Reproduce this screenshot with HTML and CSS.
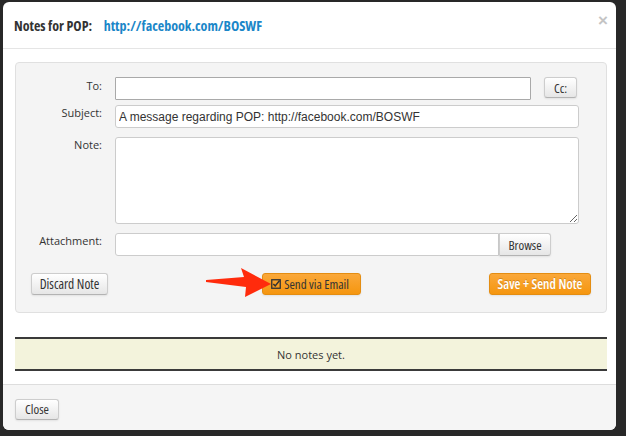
FILE: index.html
```html
<!DOCTYPE html>
<html lang="en">
<head>
  <meta charset="UTF-8">
  <title>Notes for POP</title>
  <link rel="stylesheet" href="styles.css">
</head>
<body>
  <div class="modal">
    <div class="modal-header">
      <h3>Notes for POP: <a href="#">http://facebook.com/BOSWF</a></h3>
      <span class="close">×</span>
    </div>

    <div class="modal-body">
      <div class="well">
        <div class="row row-to">
          <label>To:</label>
          <input type="text" class="input dark">
          <button class="btn cc">Cc:</button>
        </div>
        <div class="row">
          <label>Subject:</label>
          <input type="text" class="input" value="A message regarding POP: http://facebook.com/BOSWF">
        </div>
        <div class="row">
          <label>Note:</label>
          <textarea class="input note"></textarea>
        </div>
        <div class="row row-file">
          <label>Attachment:</label>
          <input type="text" class="input file">
          <button class="btn browse">Browse</button>
        </div>

        <div class="actions">
          <button class="btn discard">Discard Note</button>
          <button class="btn btn-orange send">
            <svg width="10" height="10" viewBox="0 0 10 10">
              <rect x="0.75" y="0.75" width="8.5" height="8.5" fill="none" stroke="#333" stroke-width="1.3"/>
              <path d="M2.3 5 L4.2 6.9 L8.6 1.6" fill="none" stroke="#333" stroke-width="1.5"/>
            </svg>
            Send via Email
          </button>
          <button class="btn btn-orange save">Save + Send Note</button>
          <svg class="arrow" width="70" height="34" viewBox="0 0 70 34">
            <path d="M2 14 L40 11 L37 2 L67 18 L41 31 L42 21 L2 16 Z" fill="#ff2b0c"/>
          </svg>
        </div>
      </div>

      <div class="notes">No notes yet.</div>
    </div>

    <div class="modal-footer">
      <button class="btn">Close</button>
    </div>
  </div>
</body>
</html>
```

FILE: styles.css
```css
body {
  margin: 0;
  padding: 2px 0 0 3px;
  background: #282828;
  font-family: "Open Sans", "DejaVu Sans", sans-serif;
  color: #333;
  height: 434px;
  overflow: hidden;
}

.modal {
  width: 613px;
  height: 428px;
  background: #fff;
  border-radius: 6px;
  overflow: hidden;
}

.modal-header {
  height: 46px;
  border-bottom: 1px solid #e5e5e5;
  display: flex;
  align-items: center;
  justify-content: space-between;
  padding: 0 8px 0 11px;
}

.modal-header h3 {
  margin: 0;
  font-size: 14px;
  font-stretch: 75%;
  font-weight: bold;
  color: #333;
}

.modal-header a {
  color: #1a86c8;
  text-decoration: none;
  margin-left: 9px;
}

.close {
  color: #c4c4c4;
  font-family: "Liberation Sans", sans-serif;
  font-size: 17px;
  font-weight: bold;
  margin-top: -8px;
}

.modal-body {
  padding: 13px 9px 13px 12px;
}

.well {
  position: relative;
  background: #f4f4f4;
  border: 1px solid #e0e0e0;
  border-radius: 4px;
  padding: 14px 27px 17px 0;
}

.row {
  display: flex;
  align-items: flex-start;
  margin-bottom: 9px;
}

.row-to {
  margin-bottom: 5px;
  padding-right: 2px;
}

.row-file {
  padding-right: 28px;
  margin-bottom: 17px;
}

.row label {
  width: 86px;
  margin-right: 13px;
  text-align: right;
  font-size: 11px;
  line-height: 15px;
  padding-top: 0;
  color: #333;
}

.row-to label {
  padding-top: 1px;
}

.input {
  flex: 1;
  height: 23px;
  box-sizing: border-box;
  border: 1px solid #ccc;
  border-radius: 3px;
  background: #fff;
  font-family: "Liberation Sans", Arial, sans-serif;
  font-size: 12px;
  color: #333;
  padding: 2px 3px;
  margin: 0;
}

.input.dark {
  border-color: #a9a9a9;
  border-radius: 1px;
}

.input.note {
  height: 87px;
  resize: both;
}

.input.file {
  border-radius: 3px 0 0 3px;
}

.btn {
  font-family: "Open Sans", "DejaVu Sans Condensed", sans-serif;
  font-stretch: 75%;
  font-size: 13px;
  color: #333;
  height: 22px;
  padding: 0;
  white-space: nowrap;
  background: linear-gradient(#ffffff, #e6e6e6);
  border: 1px solid #cdcdcd;
  border-bottom-color: #b3b3b3;
  border-radius: 3px;
  box-shadow: 0 1px 2px rgba(0, 0, 0, 0.08);
  display: inline-flex;
  align-items: center;
  justify-content: center;
}

.btn.cc {
  width: 33px;
  height: 21px;
  margin-left: 13px;
}

.btn.browse {
  width: 52px;
  height: 23px;
  border-radius: 0 3px 3px 0;
}

.actions {
  display: grid;
  grid-template-columns: 1fr auto 1fr;
  align-items: center;
  padding: 0 15px;
  margin-right: -27px;
}

.discard {
  justify-self: start;
  width: 77px;
  font-size: 13.5px;
}

.send {
  justify-self: center;
  width: 99px;
  gap: 3px;
  padding-right: 2px;
}

.save {
  justify-self: end;
  width: 102px;
  color: #fff;
  font-size: 13.5px;
  font-weight: 600;
  text-shadow: 0 -1px 0 rgba(0, 0, 0, 0.2);
}

.btn-orange {
  background: linear-gradient(#faa83a, #f5960f);
  border: 1px solid #e48d12;
}

.arrow {
  position: absolute;
  left: 188px;
  top: 203px;
}

.notes {
  margin-top: 24px;
  height: 30px;
  background: #f3f3dc;
  border-top: 2px solid #3a3a3a;
  border-bottom: 2px solid #3a3a3a;
  display: flex;
  align-items: center;
  justify-content: center;
  font-size: 11px;
  color: #333;
}

.modal-footer {
  background: #f5f5f5;
  border-top: 1px solid #dddddd;
  height: 47px;
  padding: 12px 12px 0;
  box-sizing: border-box;
}

.modal-footer .btn {
  width: 44px;
  height: 21px;
}
```
